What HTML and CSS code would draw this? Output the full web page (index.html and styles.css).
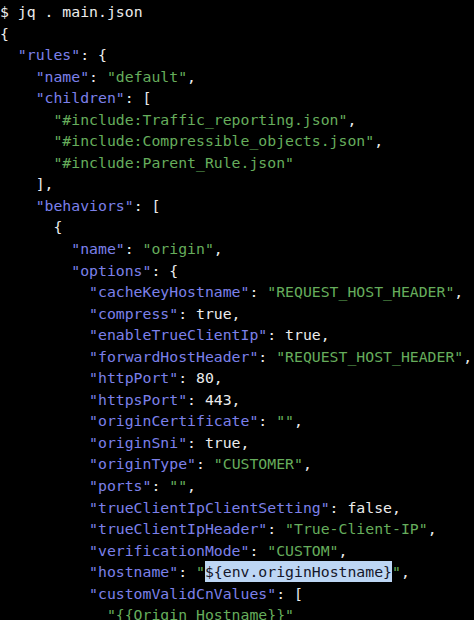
FILE: index.html
```html
<!DOCTYPE html>
<html>
<head>
<meta charset="utf-8">
<link rel="stylesheet" href="styles.css">
</head>
<body>
<div class="term">
<div class="ln">$ jq . main.json</div>
<div class="ln">{</div>
<div class="ln i1"><span class="k">"rules"</span>: {</div>
<div class="ln i2"><span class="k">"name"</span>: <span class="s">"default"</span>,</div>
<div class="ln i2"><span class="k">"children"</span>: [</div>
<div class="ln i3"><span class="s">"#include:Traffic_reporting.json"</span>,</div>
<div class="ln i3"><span class="s">"#include:Compressible_objects.json"</span>,</div>
<div class="ln i3"><span class="s">"#include:Parent_Rule.json"</span></div>
<div class="ln i2">],</div>
<div class="ln i2"><span class="k">"behaviors"</span>: [</div>
<div class="ln i3">{</div>
<div class="ln i4"><span class="k">"name"</span>: <span class="s">"origin"</span>,</div>
<div class="ln i4"><span class="k">"options"</span>: {</div>
<div class="ln i5"><span class="k">"cacheKeyHostname"</span>: <span class="s">"REQUEST_HOST_HEADER"</span>,</div>
<div class="ln i5"><span class="k">"compress"</span>: true,</div>
<div class="ln i5"><span class="k">"enableTrueClientIp"</span>: true,</div>
<div class="ln i5"><span class="k">"forwardHostHeader"</span>: <span class="s">"REQUEST_HOST_HEADER"</span>,</div>
<div class="ln i5"><span class="k">"httpPort"</span>: 80,</div>
<div class="ln i5"><span class="k">"httpsPort"</span>: 443,</div>
<div class="ln i5"><span class="k">"originCertificate"</span>: <span class="s">""</span>,</div>
<div class="ln i5"><span class="k">"originSni"</span>: true,</div>
<div class="ln i5"><span class="k">"originType"</span>: <span class="s">"CUSTOMER"</span>,</div>
<div class="ln i5"><span class="k">"ports"</span>: <span class="s">""</span>,</div>
<div class="ln i5"><span class="k">"trueClientIpClientSetting"</span>: false,</div>
<div class="ln i5"><span class="k">"trueClientIpHeader"</span>: <span class="s">"True-Client-IP"</span>,</div>
<div class="ln i5"><span class="k">"verificationMode"</span>: <span class="s">"CUSTOM"</span>,</div>
<div class="ln i5"><span class="k">"hostname"</span>: <span class="s">"</span><span class="hl">${env.originHostname}</span><span class="s">"</span>,</div>
<div class="ln i5"><span class="k">"customValidCnValues"</span>: [</div>
<div class="ln i6"><span class="s">"{{Origin_Hostname}}"</span></div>
</div>
</body>
</html>
```
FILE: styles.css
```css
html, body {
  margin: 0;
  padding: 0;
  background: #000;
  overflow: hidden;
}
.term {
  height: 620px;
  overflow: hidden;
  padding: 1px 0 0 0;
  box-sizing: border-box;
  font-family: "DejaVu Sans Mono", "Liberation Mono", monospace;
  font-size: 14.8px;
  line-height: 21.56px;
  color: #ececec;
}
.ln {
  white-space: pre;
  height: 21.56px;
}
.i1 { padding-left: 2ch; }
.i2 { padding-left: 4ch; }
.i3 { padding-left: 6ch; }
.i4 { padding-left: 8ch; }
.i5 { padding-left: 10ch; }
.i6 { padding-left: 12ch; }
.k {
  color: #7c80ea;
}
.s {
  color: #66ad5c;
}
.hl {
  background: #bdd6f4;
  color: #15172a;
  padding: 2px 0;
}
```
